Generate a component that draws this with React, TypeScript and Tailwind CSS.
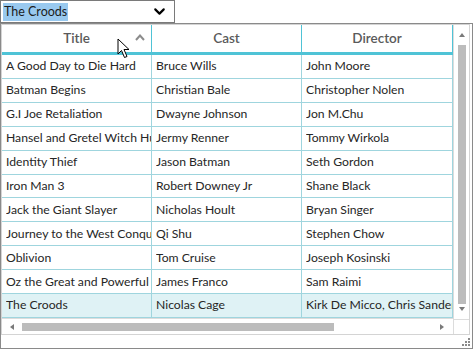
import { ChevronDown } from "lucide-react";

const movies = [
  ["A Good Day to Die Hard", "Bruce Wills", "John Moore"],
  ["Batman Begins", "Christian Bale", "Christopher Nolen"],
  ["G.I Joe Retaliation", "Dwayne Johnson", "Jon M.Chu"],
  ["Hansel and Gretel Witch Hunters", "Jermy Renner", "Tommy Wirkola"],
  ["Identity Thief", "Jason Batman", "Seth Gordon"],
  ["Iron Man 3", "Robert Downey Jr", "Shane Black"],
  ["Jack the Giant Slayer", "Nicholas Hoult", "Bryan Singer"],
  ["Journey to the West Conquering the Demons", "Qi Shu", "Stephen Chow"],
  ["Oblivion", "Tom Cruise", "Joseph Kosinski"],
  ["Oz the Great and Powerful", "James Franco", "Sam Raimi"],
  ["The Croods", "Nicolas Cage", "Kirk De Micco, Chris Sanders"],
];

const selected = "The Croods";

export default function App() {
  return (
    <div className="w-[473px] h-[349px] bg-white font-['Lato','Liberation_Sans',sans-serif] text-[12.2px] text-[#262626] overflow-hidden">
      {/* combo */}
      <div className="w-[175px] h-[23px] border border-[#7a7a7a] flex items-center pl-[2px] pr-[6px] bg-white">
        <span className="bg-[#99c9ef] h-[18px] px-[1px] leading-[18px] text-[12.5px] text-[#1b1b1b]">{selected}</span>
        <ChevronDown size={17} strokeWidth={3} className="ml-auto text-black" />
      </div>

      {/* popup */}
      <div className="w-[473px] h-[326px] border border-[#8a8a8a] flex flex-col">
        <div className="flex h-[311px] border border-[#d4d4d4] mr-[2px]">
          <div className="w-[452px] flex flex-col">
            {/* header */}
            <div className="relative flex h-[30px] border-b-[3px] border-[#4fc3d6] text-[#5a5a5a] font-semibold text-[13.5px]">
              {["Title", "Cast", "Director"].map((h, i) => (
                <div key={h} className={`h-full flex items-center justify-center border-r border-[#4fc3d6] ${i === 2 ? "w-[151px]" : "w-[150px]"}`}>
                  {h}
                </div>
              ))}
              <svg className="absolute left-[133px] top-[9px]" width="10" height="7" viewBox="0 0 10 7">
                <path d="M1 6 L5 1.5 L9 6" fill="none" stroke="#8c8c8c" strokeWidth="2" />
              </svg>
              <svg className="absolute left-[115px] top-[13px]" width="14" height="21" viewBox="0 0 14 21">
                <path d="M1 1 L1 16 L4.5 12.5 L7.5 19.5 L10 18.5 L7 11.5 L12 11.5 Z" fill="#fff" stroke="#000" strokeWidth="1" strokeLinejoin="round" />
              </svg>
            </div>
            {/* rows */}
            {movies.map((m) => (
              <div key={m[0]} className={`flex h-[24px] border-b border-[#9fd5de] ${m[0] === selected ? "bg-[#dff2f5]" : ""}`}>
                {m.map((c, i) => (
                  <div key={i} className={`h-full flex items-center pl-[4px] border-r border-[#9fd5de] ${i === 2 ? "w-[151px]" : "w-[150px]"}`}>
                    <span className="block w-full overflow-hidden whitespace-nowrap">{c}</span>
                  </div>
                ))}
              </div>
            ))}
            {/* horizontal scrollbar */}
            <div className="flex items-center h-[16px] mt-auto border-t border-[#dcdcdc] bg-white">
              <svg className="ml-[8px]" width="4" height="6" viewBox="0 0 4 6"><path d="M4 0 L0 3 L4 6 Z" fill="#7a7a7a" /></svg>
              <div className="ml-[8px] w-[312px] h-[8px] bg-[#bcbcbc]" />
              <svg className="ml-auto mr-[9px]" width="4" height="6" viewBox="0 0 4 6"><path d="M0 0 L4 3 L0 6 Z" fill="#7a7a7a" /></svg>
            </div>
          </div>
          {/* vertical scrollbar */}
          <div className="w-[16px] flex flex-col border-l border-[#dcdcdc]">
            <div className="h-[294px] flex flex-col items-center">
              <svg className="mt-[8px]" width="6" height="4" viewBox="0 0 6 4"><path d="M0 4 L3 0 L6 4 Z" fill="#7a7a7a" /></svg>
              <div className="mt-[8px] w-[8px] h-[259px] bg-[#bcbcbc]" />
              <svg className="mt-auto mb-[8px]" width="6" height="4" viewBox="0 0 6 4"><path d="M0 0 L3 4 L6 0 Z" fill="#7a7a7a" /></svg>
            </div>
            <div className="flex-1 border-t border-[#dcdcdc]" />
          </div>
        </div>
        <div className="flex-1 flex justify-end items-end pr-[1px] pb-[1px]">
          <svg width="9" height="9" viewBox="0 0 9 9">
            <rect x="6" y="0" width="2" height="2" fill="#8a8a8a" />
            <rect x="3" y="3" width="2" height="2" fill="#8a8a8a" />
            <rect x="6" y="3" width="2" height="2" fill="#8a8a8a" />
            <rect x="0" y="6" width="2" height="2" fill="#8a8a8a" />
            <rect x="3" y="6" width="2" height="2" fill="#8a8a8a" />
            <rect x="6" y="6" width="2" height="2" fill="#8a8a8a" />
          </svg>
        </div>
      </div>
    </div>
  );
}
